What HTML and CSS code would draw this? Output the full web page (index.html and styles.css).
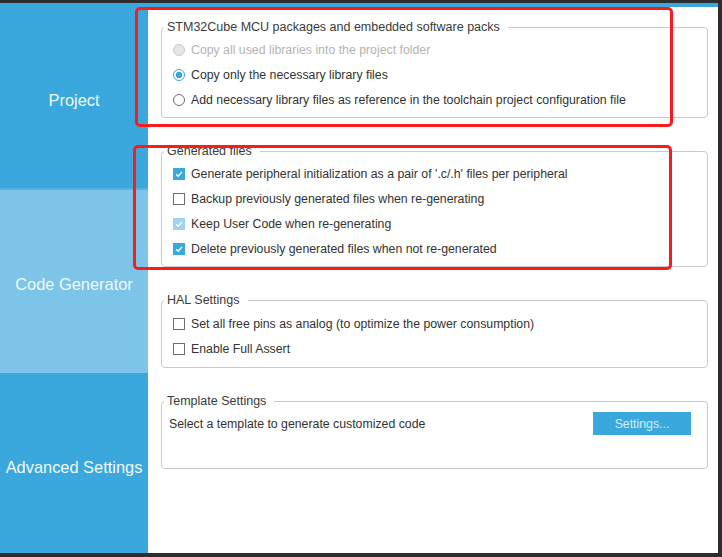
FILE: index.html
```html
<!DOCTYPE html>
<html>
<head>
<meta charset="utf-8">
<link rel="stylesheet" href="styles.css">
</head>
<body>
<div class="screen">
  <div class="window">
    <nav class="sidebar">
      <div class="tab tab-project">Project</div>
      <div class="tab tab-code">Code Generator</div>
      <div class="tab tab-adv">Advanced Settings</div>
    </nav>
    <main class="content">
      <fieldset class="group g1">
        <legend>STM32Cube MCU packages and embedded software packs</legend>
        <div class="row disabled"><span class="radio"></span>Copy all used libraries into the project folder</div>
        <div class="row"><span class="radio on"></span>Copy only the necessary library files</div>
        <div class="row"><span class="radio"></span>Add necessary library files as reference in the toolchain project configuration file</div>
      </fieldset>
      <fieldset class="group g2">
        <legend>Generated files</legend>
        <div class="row"><span class="check on"><svg viewBox="0 0 12 12"><path d="M2.6 6.2 L5 8.6 L9.6 3.4" /></svg></span>Generate peripheral initialization as a pair of '.c/.h' files per peripheral</div>
        <div class="row"><span class="check"></span>Backup previously generated files when re-generating</div>
        <div class="row"><span class="check on dim"><svg viewBox="0 0 12 12"><path d="M2.6 6.2 L5 8.6 L9.6 3.4" /></svg></span>Keep User Code when re-generating</div>
        <div class="row"><span class="check on"><svg viewBox="0 0 12 12"><path d="M2.6 6.2 L5 8.6 L9.6 3.4" /></svg></span>Delete previously generated files when not re-generated</div>
      </fieldset>
      <fieldset class="group g3">
        <legend>HAL Settings</legend>
        <div class="row"><span class="check"></span>Set all free pins as analog (to optimize the power consumption)</div>
        <div class="row"><span class="check"></span>Enable Full Assert</div>
      </fieldset>
      <fieldset class="group g4">
        <legend>Template Settings</legend>
        <div class="trow">
          <span class="ttext">Select a template to generate customized code</span>
          <button class="btn">Settings...</button>
        </div>
      </fieldset>
    </main>
  </div>
  <div class="mark mark1"></div>
  <div class="mark mark2"></div>
</div>
</body>
</html>
```
FILE: styles.css
```css
* { box-sizing: border-box; }
html, body { margin: 0; padding: 0; background: #2b2d2f; }
.screen {
  position: relative;
  width: 722px;
  height: 557px;
  padding: 3px 4px 4px 0;
  background: #2b2d2f;
  font-family: "Liberation Sans", Arial, sans-serif;
}
.window {
  width: 718px;
  height: 550px;
  border-top: 4px solid #3ba8dc;
  display: flex;
  background: #ffffff;
}
.sidebar {
  width: 148px;
  display: flex;
  flex-direction: column;
}
.tab {
  display: flex;
  align-items: center;
  justify-content: center;
  color: #f2f9fd;
  font-size: 16.4px;
  padding-top: 6px;
}
.tab-project { height: 183px; background: #3aa8dc; border-bottom: 2px solid #55b4e2; }
.tab-code { height: 183px; background: #7cc4e8; }
.tab-adv { flex: 1; background: #3aa8dc; padding-top: 9px; }
.content {
  flex: 1;
  padding: 13px 10px 0 13px;
  display: flex;
  flex-direction: column;
  gap: 26px;
}
.group {
  margin: 0;
  border: 1px solid #c6cbd0;
  border-radius: 4px;
  padding: 3px 14px 5px 11px;
  min-width: 0;
}
.group legend {
  font-size: 12.5px;
  line-height: 14px;
  color: #3a3a3a;
  padding: 0 8px 0 3px;
  margin-left: -9px;
}
.g3 { padding-top: 4px; padding-bottom: 6px; }
.g4 { padding-top: 4px; padding-bottom: 33px; padding-right: 16px; }
.row {
  height: 25px;
  display: flex;
  align-items: center;
  gap: 6px;
  font-size: 12.3px;
  color: #333333;
}
.row.disabled { color: #b4b4b4; }
.radio {
  width: 12px;
  height: 12px;
  border-radius: 50%;
  border: 1px solid #6e6e6e;
  background: #fff;
  flex: none;
}
.row.disabled .radio { border-color: #c8c8c8; background: #e6e6e6; }
.radio.on {
  border-color: #3aa8dc;
  background: radial-gradient(circle, #3aa8dc 0 3px, #ffffff 3.6px);
}
.check {
  width: 12px;
  height: 12px;
  border: 1px solid #6e6e6e;
  background: #fff;
  flex: none;
  display: flex;
}
.check.on { border-color: #3aa8dc; background: #3aa8dc; }
.check.dim { border-color: #9ed3ee; background: #9ed3ee; }
.check svg { width: 10px; height: 10px; }
.check path { fill: none; stroke: #ffffff; stroke-width: 1.6; }
.trow {
  display: flex;
  align-items: center;
  justify-content: space-between;
  height: 23px;
}
.ttext { font-size: 12.3px; color: #333333; margin-left: -4px; }
.btn {
  width: 98px;
  height: 23px;
  border: none;
  background: #3aa8dc;
  color: #d6eefa;
  font-family: "Liberation Sans", Arial, sans-serif;
  font-size: 12.3px;
  padding: 0;
  border-radius: 0;
}
.mark {
  position: absolute;
  border: 3px solid #fb1b1b;
  border-radius: 5px;
}
.mark1 { left: 135px; top: 7px; width: 538px; height: 120px; }
.mark2 { left: 133px; top: 145px; width: 539px; height: 125px; }
```
